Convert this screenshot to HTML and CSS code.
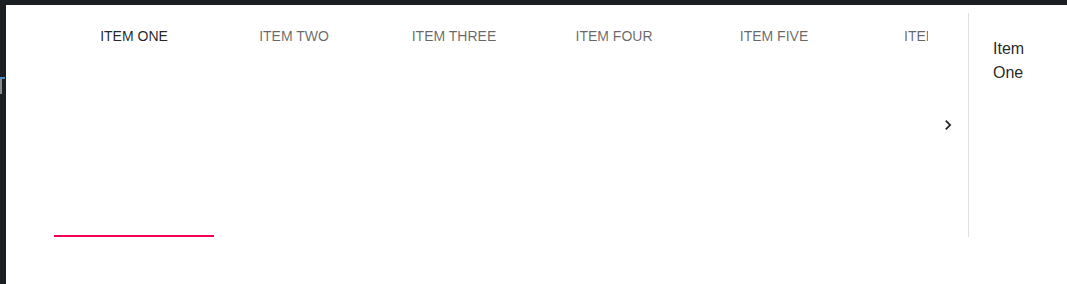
FILE: index.html
```html
<!DOCTYPE html>
<html>
<head>
<meta charset="utf-8">
<link rel="stylesheet" href="styles.css">
</head>
<body>
<div class="side-marker"></div>
<div class="frame">
  <div class="root">
    <div class="tabs">
      <div class="scroll-btn disabled"></div>
      <div class="scroller">
        <div class="tab-list">
          <div class="tab selected">Item One</div>
          <div class="tab">Item Two</div>
          <div class="tab">Item Three</div>
          <div class="tab">Item Four</div>
          <div class="tab">Item Five</div>
          <div class="tab">Item Six</div>
          <div class="tab">Item Seven</div>
        </div>
        <span class="indicator"></span>
      </div>
      <div class="scroll-btn">
        <svg class="chev" viewBox="0 0 24 24" width="20" height="20"><path d="M8.59 16.59L13.17 12 8.59 7.41 10 6l6 6-6 6-1.41-1.41z"/></svg>
      </div>
    </div>
    <div class="panel">Item One</div>
  </div>
</div>
</body>
</html>
```
FILE: styles.css
```css
html, body { margin: 0; padding: 0; }
body {
  background: #1b1f23;
  height: 284px;
  overflow: hidden;
  position: relative;
}
.side-marker {
  position: absolute;
  left: 0;
  top: 77px;
  width: 5px;
  height: 17px;
  border-top: 2px solid #4a90c8;
  box-sizing: border-box;
}
.side-marker::after {
  content: "";
  display: block;
  width: 2px;
  height: 15px;
  background: #8a8a8a;
}
.frame {
  margin: 5px 0 0 6px;
  background: #fff;
  height: 279px;
  padding: 8px;
  box-sizing: border-box;
  font-family: "Liberation Sans", Arial, sans-serif;
}
.root {
  display: flex;
  height: 224px;
}
.tabs {
  display: flex;
  border-right: 1px solid #e0e0e0;
  width: 955px;
  box-sizing: border-box;
  flex: none;
}
.scroll-btn {
  width: 40px;
  flex: none;
  display: flex;
  align-items: center;
  justify-content: center;
}
.scroll-btn.disabled { opacity: 0; }
.chev { fill: rgba(0,0,0,0.87); display: block; }
.scroller {
  flex: 1;
  overflow: hidden;
  position: relative;
}
.tab-list {
  display: flex;
  white-space: nowrap;
}
.tab {
  min-width: 160px;
  width: 160px;
  flex: none;
  box-sizing: border-box;
  min-height: 48px;
  padding: 12px 16px;
  display: flex;
  align-items: center;
  justify-content: center;
  font-size: 14px;
  line-height: 1.25;
  text-transform: uppercase;
  color: rgba(0,0,0,0.6);
}
.tab.selected { color: rgba(0,0,0,0.87); }
.indicator {
  position: absolute;
  left: 0;
  bottom: 0;
  width: 160px;
  height: 2px;
  background: #f50057;
}
.panel {
  padding: 24px;
  font-size: 16px;
  line-height: 24px;
  color: rgba(0,0,0,0.87);
  width: 50px;
}
```
